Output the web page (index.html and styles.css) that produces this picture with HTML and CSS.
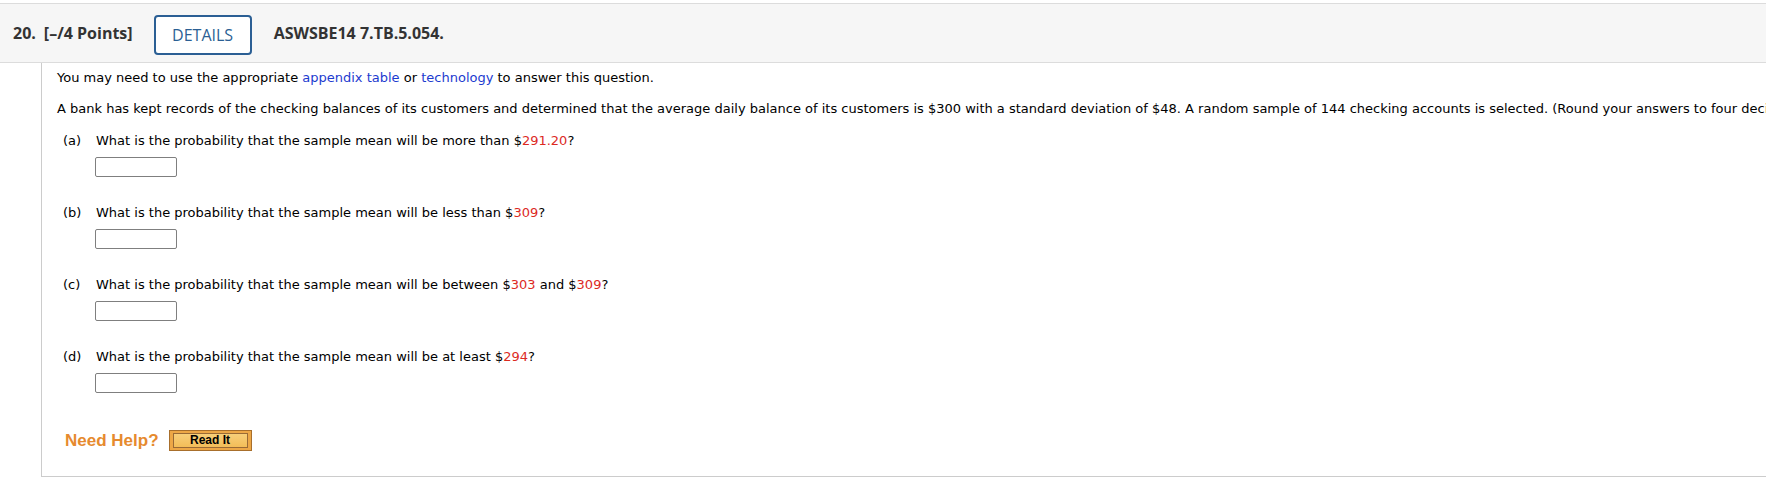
FILE: index.html
```html
<!DOCTYPE html>
<html>
<head>
<meta charset="utf-8">
<link rel="stylesheet" href="styles.css">
</head>
<body>
<div class="header">
  <span class="qnum">20.</span>
  <span class="points">[–/4 Points]</span>
  <span class="details">DETAILS</span>
  <span class="code">ASWSBE14 7.TB.5.054.</span>
</div>
<div class="body">
  <p class="line">You may need to use the appropriate <span class="link">appendix table</span> or <span class="link">technology</span> to answer this question.</p>
  <p class="line para2">A bank has kept records of the checking balances of its customers and determined that the average daily balance of its customers is $300 with a standard deviation of $48. A random sample of 144 checking accounts is selected. (Round your answers to four decimal places.)</p>
  <div class="parts">
    <div class="part">
      <div class="q"><span class="lbl">(a)</span><span>What is the probability that the sample mean will be more than $<span class="red">291.20</span>?</span></div>
      <div class="inp"></div>
    </div>
    <div class="part">
      <div class="q"><span class="lbl">(b)</span><span>What is the probability that the sample mean will be less than $<span class="red">309</span>?</span></div>
      <div class="inp"></div>
    </div>
    <div class="part">
      <div class="q"><span class="lbl">(c)</span><span>What is the probability that the sample mean will be between $<span class="red">303</span> and $<span class="red">309</span>?</span></div>
      <div class="inp"></div>
    </div>
    <div class="part">
      <div class="q"><span class="lbl">(d)</span><span>What is the probability that the sample mean will be at least $<span class="red">294</span>?</span></div>
      <div class="inp"></div>
    </div>
  </div>
  <div class="help">
    <span class="needhelp">Need Help?</span>
    <span class="readit"><span class="readit-in">Read It</span></span>
  </div>
</div>
</body>
</html>
```

FILE: styles.css
```css
html, body {
  margin: 0;
  padding: 0;
  overflow: hidden;
  background: #fff;
}
body {
  width: 1766px;
  height: 502px;
}
.header {
  margin-top: 3px;
  height: 58px;
  border-top: 1px solid #dcdcdc;
  border-bottom: 1px solid #dcdcdc;
  background: #f6f6f6;
  display: flex;
  align-items: center;
  padding-left: 13px;
  font-family: "Open Sans", "DejaVu Sans", sans-serif;
  font-size: 16px;
  color: #333;
  white-space: nowrap;
}
.qnum {
  font-weight: 700;
  margin-right: 8px;
}
.points {
  font-weight: 700;
  margin-right: 21px;
}
.details {
  box-sizing: border-box;
  width: 98px;
  height: 40px;
  border: 2px solid #2b5f94;
  border-radius: 4px;
  color: #2b5f94;
  display: flex;
  align-items: center;
  justify-content: center;
  background: #fff;
  margin-right: 22px;
  margin-top: 4px;
}
.code {
  font-weight: 700;
}
.body {
  margin-left: 41px;
  border-left: 1px solid #cccccc;
  border-bottom: 1px solid #cccccc;
  padding: 7px 0 25px 15px;
  font-family: "DejaVu Sans", Verdana, sans-serif;
  font-size: 13px;
  line-height: 16px;
  color: #000;
  white-space: nowrap;
}
.line {
  margin: 0;
}
.para2 {
  margin-top: 15px;
}
.link {
  color: #1c3bcf;
}
.red {
  color: #dc2a1f;
}
.parts {
  margin-top: 16px;
  margin-left: 6px;
  display: flex;
  flex-direction: column;
  gap: 28px;
}
.part {
  display: flex;
  flex-direction: column;
}
.q {
  display: flex;
}
.lbl {
  width: 33px;
}
.inp {
  box-sizing: border-box;
  width: 82px;
  height: 20px;
  margin-top: 8px;
  margin-left: 32px;
  border: 1px solid #7f7f7f;
  border-radius: 2px;
  background: #fff;
}
.help {
  margin-top: 37px;
  margin-left: 8px;
  display: flex;
  align-items: center;
  gap: 10px;
}
.needhelp {
  font-family: "Liberation Sans", Arial, sans-serif;
  font-weight: 700;
  font-size: 17px;
  color: #e68a2e;
}
.readit {
  box-sizing: border-box;
  width: 83px;
  height: 21px;
  border: 1px solid #a86f2c;
  background: #eda746;
  padding: 2px 3px;
  display: flex;
}
.readit-in {
  flex: 1;
  border: 1px solid #9a6a35;
  background: linear-gradient(#f8cf7a, #f3bd58);
  font-family: "Liberation Sans", Arial, sans-serif;
  font-weight: 700;
  font-size: 12px;
  line-height: 13px;
  color: #000;
  display: flex;
  align-items: center;
  justify-content: center;
}
```
